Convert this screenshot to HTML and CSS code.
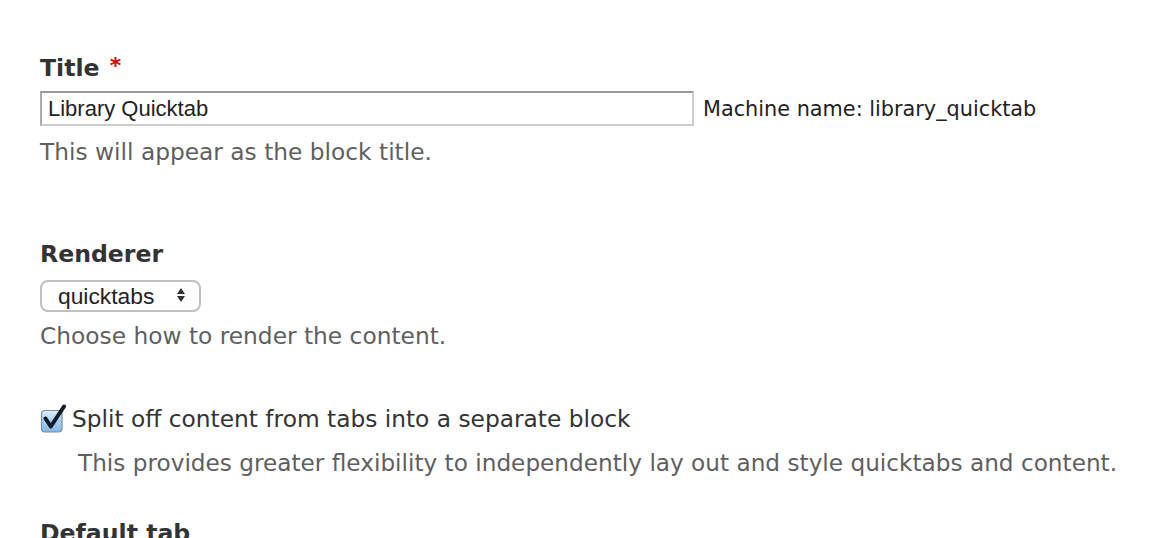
FILE: index.html
```html
<!DOCTYPE html>
<html>
<head>
<meta charset="utf-8">
<link rel="stylesheet" href="styles.css">
</head>
<body>
<form class="form">
  <div class="item item-title">
    <label class="label">Title <span class="req">*</span></label>
    <div class="input-row">
      <input class="text" type="text" value="Library Quicktab">
      <span class="machine">Machine name: library_quicktab</span>
    </div>
    <div class="desc desc-title">This will appear as the block title.</div>
  </div>

  <div class="item item-renderer">
    <label class="label">Renderer</label>
    <div class="select">
      <span class="select-value">quicktabs</span>
      <svg class="select-arrows" width="8" height="16" viewBox="0 0 8 16"><path d="M4 1 L8 7 H0 Z M4 15 L8 9 H0 Z" fill="#333"/></svg>
    </div>
    <div class="desc desc-select">Choose how to render the content.</div>
  </div>

  <div class="item item-check">
    <div class="check-row">
      <span class="checkbox">
        <svg width="27" height="30" viewBox="0 0 27 30">
          <defs>
            <linearGradient id="cbg" x1="0" y1="0" x2="0" y2="1">
              <stop offset="0" stop-color="#e2f0fc"/>
              <stop offset="0.45" stop-color="#a9d2f3"/>
              <stop offset="1" stop-color="#7fbaeb"/>
            </linearGradient>
          </defs>
          <rect x="1.5" y="6.5" width="20.5" height="21.5" rx="3.5" fill="url(#cbg)" stroke="#7f8c99" stroke-width="1.2"/>
          <path d="M5.5 14.5 L10.8 22.5 L24 2.5" fill="none" stroke="#0e1a28" stroke-width="4" stroke-linejoin="round" stroke-linecap="round"/>
        </svg>
      </span>
      <span class="check-label">Split off content from tabs into a separate block</span>
    </div>
    <div class="desc desc-check">This provides greater flexibility to independently lay out and style quicktabs and content.</div>
  </div>

  <div class="item item-default">
    <label class="label">Default tab</label>
  </div>
</form>
</body>
</html>
```

FILE: styles.css
```css
html, body {
  margin: 0;
  padding: 0;
  background: #ffffff;
}
body {
  font-family: "DejaVu Sans", "Verdana", sans-serif;
  color: #333333;
  width: 1150px;
  height: 538px;
  overflow: hidden;
}
.form {
  padding: 53px 0 0 40px;
}
.item {
  display: flex;
  flex-direction: column;
  align-items: flex-start;
}
.label {
  display: block;
  font-weight: bold;
  font-size: 23.6px;
  line-height: 30px;
  color: #333333;
  white-space: nowrap;
}
.req {
  display: inline-block;
  margin-left: 2px;
  color: #e00000;
  font-size: 22px;
  line-height: 22px;
  vertical-align: top;
  margin-top: 2px;
}
.input-row {
  display: flex;
  align-items: center;
  margin-top: 8px;
}
.text {
  box-sizing: border-box;
  width: 654px;
  height: 35px;
  margin: 0;
  padding: 0 6px;
  border: 2px solid #cccccc;
  border-top-color: #9a9a9a;
  border-left-color: #aaaaaa;
  font-family: "Liberation Sans", Arial, sans-serif;
  font-size: 22px;
  color: #222222;
  background: #ffffff;
  outline: none;
}
.machine {
  margin-left: 9px;
  font-size: 20.8px;
  color: #222222;
  white-space: nowrap;
}
.desc {
  font-size: 23.3px;
  line-height: 30px;
  color: #5f5f5f;
  white-space: nowrap;
}
.desc-title {
  margin-top: 11px;
}
.item-renderer {
  margin-top: 72px;
}
.select {
  box-sizing: border-box;
  width: 161px;
  height: 32px;
  margin-top: 11px;
  border: 2px solid #c0c0c0;
  border-radius: 8px;
  display: flex;
  align-items: center;
  justify-content: space-between;
  padding: 0 14px 0 16px;
  background: #ffffff;
}
.select-value {
  font-family: "Liberation Sans", Arial, sans-serif;
  font-size: 22.8px;
  color: #222222;
}
.select-arrows {
  display: block;
  margin-bottom: 2px;
}
.desc-select {
  margin-top: 9px;
}
.item-check {
  margin-top: 53px;
}
.check-row {
  display: flex;
  align-items: flex-start;
}
.checkbox {
  display: block;
  width: 27px;
  height: 30px;
  margin-right: 5px;
}
.checkbox svg {
  display: block;
}
.check-label {
  font-size: 23.3px;
  line-height: 30px;
  color: #333333;
  white-space: nowrap;
}
.desc-check {
  font-size: 23.2px;
  margin-top: 14px;
  margin-left: 38px;
}
.item-default {
  margin-top: 40px;
}
```
